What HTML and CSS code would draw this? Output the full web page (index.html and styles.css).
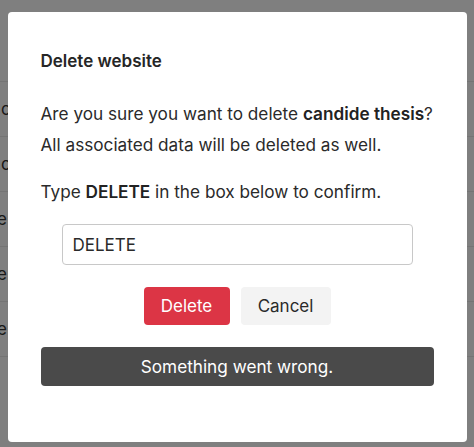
FILE: index.html
```html
<!DOCTYPE html>
<html lang="en">
<head>
<meta charset="utf-8">
<title>Delete website</title>
<link rel="stylesheet" href="styles.css">
</head>
<body>
<div class="page">
  <div class="row"><span class="cell c1">c</span></div>
  <div class="row"><span class="cell c1">c</span></div>
  <div class="row"><span class="cell c2">e</span></div>
  <div class="row"><span class="cell c2">e</span></div>
  <div class="row"><span class="cell c2">e</span></div>
  <div class="row"></div>
</div>
<div class="overlay">
  <div class="modal">
    <h2 class="title">Delete website</h2>
    <p class="text">Are you sure you want to delete <strong>candide thesis</strong>?<br>All associated data will be deleted as well.</p>
    <p class="text confirm">Type <strong>DELETE</strong> in the box below to confirm.</p>
    <input class="field" type="text" value="DELETE">
    <div class="actions">
      <button class="btn btn-danger" type="button">Delete</button>
      <button class="btn btn-light" type="button">Cancel</button>
    </div>
    <div class="alert">Something went wrong.</div>
  </div>
</div>
</body>
</html>
```
FILE: styles.css
```css
* { box-sizing: border-box; }
html, body {
  margin: 0;
  width: 474px;
  height: 447px;
  overflow: hidden;
  background: #fff;
  font-family: Inter, "Noto Sans", sans-serif;
  color: #222;
}
.page {
  padding-top: 81px;
}
.row {
  height: 55px;
  border-top: 1px solid #e8e8e8;
  display: flex;
  align-items: center;
  font-size: 17px;
  color: #333;
}
.cell { display: block; }
.c1 { margin-left: 1px; }
.c2 { margin-left: -3px; }
.overlay {
  position: fixed;
  inset: 0;
  background: rgba(0, 0, 0, 0.5);
  display: flex;
  justify-content: center;
  align-items: flex-start;
  padding-top: 12px;
}
.modal {
  width: 459px;
  height: 430px;
  background: #fff;
  border-radius: 4px;
  padding: 37px 33px 0;
  display: flex;
  flex-direction: column;
  align-items: center;
}
.title {
  align-self: stretch;
  margin: 0;
  font-size: 17px;
  font-weight: 600;
  line-height: 24px;
  color: #262626;
}
.text {
  align-self: stretch;
  margin: 25px 0 0;
  font-size: 17.2px;
  line-height: 31px;
  color: #2a2a2a;
}
.text strong { font-weight: 600; color: #222; }
.confirm { margin-top: 16px; }
.field {
  margin-top: 17px;
  width: 351px;
  height: 41px;
  border: 1px solid #c8c8c8;
  border-radius: 4px;
  padding: 0 10px;
  font-family: inherit;
  font-size: 17px;
  color: #2a2a2a;
  background: #fff;
}
.actions {
  margin-top: 22px;
  display: flex;
  gap: 11px;
}
.btn {
  height: 38px;
  border: 0;
  border-radius: 4px;
  font-family: inherit;
  font-size: 17px;
  padding: 0;
}
.btn-danger {
  width: 86px;
  background: #dc3545;
  color: #fff;
}
.btn-light {
  width: 90px;
  background: #f3f3f3;
  color: #2a2a2a;
}
.alert {
  margin-top: 22px;
  align-self: stretch;
  height: 39px;
  border-radius: 4px;
  background: #4a4a4a;
  color: #fff;
  font-size: 17.2px;
  display: flex;
  align-items: center;
  justify-content: center;
}
```
